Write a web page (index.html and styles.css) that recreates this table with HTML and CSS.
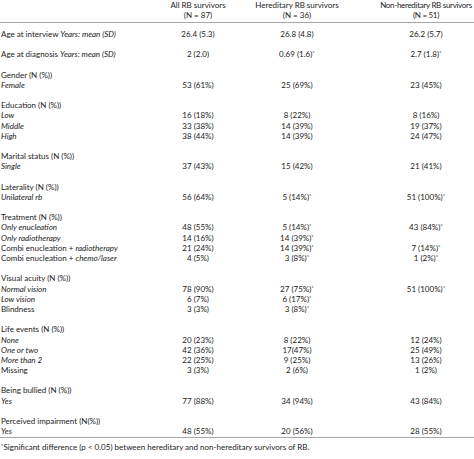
FILE: index.html
```html
<!DOCTYPE html>
<html>
<head>
<meta charset="utf-8">
<link rel="stylesheet" href="styles.css">
</head>
<body>
<div class="table">
  <div class="row head">
    <div class="lab"></div>
    <div class="val">All RB survivors<br>(N = 87)</div>
    <div class="val">Hereditary RB survivors<br>(N = 36)</div>
    <div class="val tight">Non-hereditary RB survivors<br>(N = 51)</div>
  </div>
  <div class="body">
    <div class="row"><div class="lab">Age at interview <i>Years: mean (SD)</i></div><div class="val">26.4 (5.3)</div><div class="val">26.8 (4.8)</div><div class="val">26.2 (5.7)</div></div>
    <div class="row blank"></div>
    <div class="row"><div class="lab">Age at diagnosis <i>Years: mean (SD)</i></div><div class="val">2 (2.0)</div><div class="val">0.69 (1.6)<sup>*</sup></div><div class="val">2.7 (1.8)<sup>*</sup></div></div>
    <div class="row blank"></div>
    <div class="row"><div class="lab">Gender (N (%))</div></div>
    <div class="row"><div class="lab"><i>Female</i></div><div class="val">53 (61%)</div><div class="val">25 (69%)</div><div class="val">23 (45%)</div></div>
    <div class="row blank"></div>
    <div class="row"><div class="lab">Education (N (%))</div></div>
    <div class="row"><div class="lab"><i>Low</i></div><div class="val">16 (18%)</div><div class="val">8 (22%)</div><div class="val">8 (16%)</div></div>
    <div class="row"><div class="lab"><i>Middle</i></div><div class="val">33 (38%)</div><div class="val">14 (39%)</div><div class="val">19 (37%)</div></div>
    <div class="row"><div class="lab"><i>High</i></div><div class="val">38 (44%)</div><div class="val">14 (39%)</div><div class="val">24 (47%)</div></div>
    <div class="row blank"></div>
    <div class="row"><div class="lab">Marital status (N (%))</div></div>
    <div class="row"><div class="lab"><i>Single</i></div><div class="val">37 (43%)</div><div class="val">15 (42%)</div><div class="val">21 (41%)</div></div>
    <div class="row blank"></div>
    <div class="row"><div class="lab">Laterality (N (%))</div></div>
    <div class="row"><div class="lab"><i>Unilateral rb</i></div><div class="val">56 (64%)</div><div class="val">5 (14%)<sup>*</sup></div><div class="val">51 (100%)<sup>*</sup></div></div>
    <div class="row blank"></div>
    <div class="row"><div class="lab">Treatment (N (%))</div></div>
    <div class="row"><div class="lab"><i>Only enucleation</i></div><div class="val">48 (55%)</div><div class="val">5 (14%)<sup>*</sup></div><div class="val">43 (84%)<sup>*</sup></div></div>
    <div class="row"><div class="lab"><i>Only radiotherapy</i></div><div class="val">14 (16%)</div><div class="val">14 (39%)<sup>*</sup></div><div class="val"></div></div>
    <div class="row"><div class="lab">Combi enucleation + <i>radiotherapy</i></div><div class="val">21 (24%)</div><div class="val">14 (39%)<sup>*</sup></div><div class="val">7 (14%)<sup>*</sup></div></div>
    <div class="row"><div class="lab">Combi enucleation + <i>chemo/laser</i></div><div class="val">4 (5%)</div><div class="val">3 (8%)<sup>*</sup></div><div class="val">1 (2%)<sup>*</sup></div></div>
    <div class="row blank"></div>
    <div class="row"><div class="lab">Visual acuity (N (%))</div></div>
    <div class="row"><div class="lab"><i>Normal vision</i></div><div class="val">78 (90%)</div><div class="val">27 (75%)<sup>*</sup></div><div class="val">51 (100%)<sup>*</sup></div></div>
    <div class="row"><div class="lab"><i>Low vision</i></div><div class="val">6 (7%)</div><div class="val">6 (17%)<sup>*</sup></div><div class="val"></div></div>
    <div class="row"><div class="lab">Blindness</div><div class="val">3 (3%)</div><div class="val">3 (8%)<sup>*</sup></div><div class="val"></div></div>
    <div class="row blank"></div>
    <div class="row"><div class="lab">Life events (N (%))</div></div>
    <div class="row"><div class="lab"><i>None</i></div><div class="val">20 (23%)</div><div class="val">8 (22%)</div><div class="val">12 (24%)</div></div>
    <div class="row"><div class="lab"><i>One or two</i></div><div class="val">42 (36%)</div><div class="val">17(47%)</div><div class="val">25 (49%)</div></div>
    <div class="row"><div class="lab"><i>More than 2</i></div><div class="val">22 (25%)</div><div class="val">9 (25%)</div><div class="val">13 (26%)</div></div>
    <div class="row"><div class="lab">Missing</div><div class="val">3 (3%)</div><div class="val">2 (6%)</div><div class="val">1 (2%)</div></div>
    <div class="row blank"></div>
    <div class="row"><div class="lab">Being bullied (N (%))</div></div>
    <div class="row"><div class="lab"><i>Yes</i></div><div class="val">77 (88%)</div><div class="val">34 (94%)</div><div class="val">43 (84%)</div></div>
    <div class="row blank"></div>
    <div class="row"><div class="lab">Perceived impairment (N(%))</div></div>
    <div class="row"><div class="lab"><i>Yes</i></div><div class="val">48 (55%)</div><div class="val">20 (56%)</div><div class="val">28 (55%)</div></div>
  </div>
  <div class="foot"><sup>*</sup>Significant difference (p &lt; 0.05) between hereditary and non-hereditary survivors of RB.</div>
</div>
</body>
</html>
```
FILE: styles.css
```css
html, body {
  margin: 0;
  padding: 0;
  background: #fff;
  overflow: hidden;
}
body {
  font-family: "Lato", "Liberation Sans", sans-serif;
  font-size: 8px;
  color: #222;
  width: 474px;
  height: 459px;
}
.table {
  width: 474px;
}
.row {
  display: grid;
  grid-template-columns: 150px 96px 102px 126px;
  height: 10.2px;
  line-height: 10.2px;
  white-space: nowrap;
}
.row > .val:last-child {
  margin-right: -30px;
}
.head {
  height: auto;
  padding-bottom: 2px;
  border-bottom: 1px solid #a8a8a8;
}
.head .tight {
  letter-spacing: -0.3px;
  margin-right: -26px;
}
.val {
  text-align: center;
}
.lab {
  padding-left: 1px;
}
.body {
  padding-top: 5.5px;
  border-bottom: 1px solid #a8a8a8;
  padding-bottom: 0.5px;
}
sup {
  font-size: 6px;
  line-height: 0;
  vertical-align: 2.5px;
}
.foot {
  padding-top: 4px;
  line-height: 10.2px;
  padding-left: 1px;
  white-space: nowrap;
}
```
